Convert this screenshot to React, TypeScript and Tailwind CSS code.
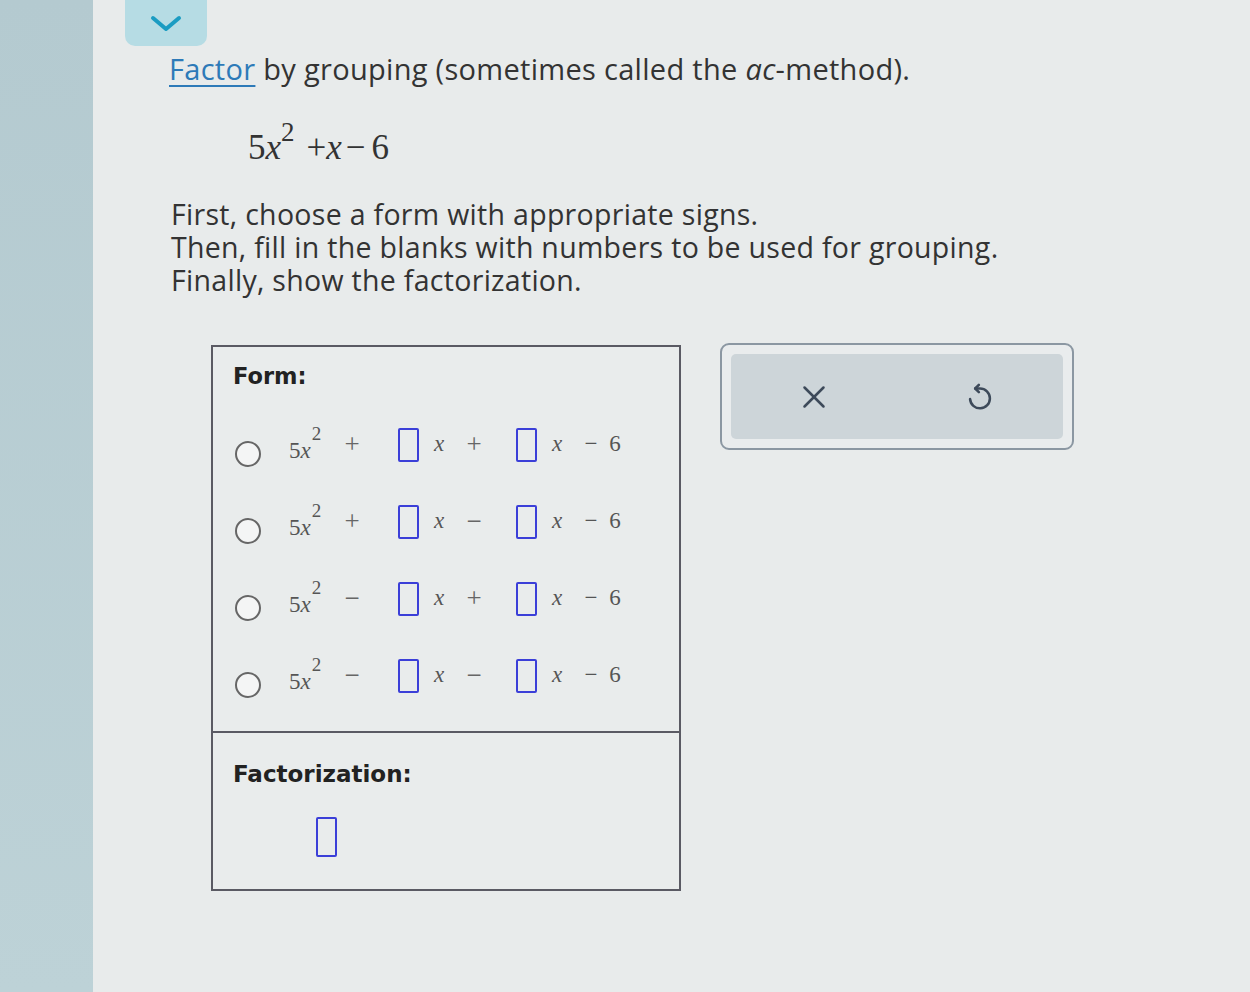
import { X } from "lucide-react";

const serif = "font-['Liberation_Serif',serif]";

function Blank({ className = "" }: { className?: string }) {
  return <span className={`block w-[21px] h-[34px] border-2 border-[#3b3fd8] rounded-[2px] ${className}`} />;
}

function FormRow({ first, second }: { first: string; second: string }) {
  return (
    <div className={`flex items-center h-[77px] text-[23px] text-[#555] ${serif}`}>
      <span className="ml-[22px] mt-[18px] w-[26px] h-[26px] rounded-full border-2 border-[#666] bg-[#f4f5f5]" />
      <span className="ml-[28px] w-[42px] whitespace-nowrap">
        5<i>x</i>
        <span className="text-[19px] [vertical-align:18px] ml-[1px]">2</span>
      </span>
      <span className="w-[42px] text-center text-[27px] text-[#666]">{first}</span>
      <Blank className="ml-[25px]" />
      <i className="w-[40px] text-center">x</i>
      <span className="w-[30px] text-center text-[27px] text-[#666]">{second}</span>
      <Blank className="ml-[27px]" />
      <i className="w-[40px] text-center">x</i>
      <span className="w-[28px] text-center">−</span>
      <span className="w-[20px] text-center">6</span>
    </div>
  );
}

function UndoIcon() {
  return (
    <svg width="34" height="34" viewBox="0 0 24 24" fill="none" stroke="#3d4a5a" strokeWidth="1.8" strokeLinecap="round" strokeLinejoin="round">
      <path d="M8.6 6 H12 A7 7 0 1 1 5 13.5" />
      <path d="M11.2 3.4 L8.6 6 L11.2 8.6" />
    </svg>
  );
}

export default function App() {
  return (
    <div className="flex w-[1250px] h-[992px] overflow-hidden font-['Open_Sans','Noto_Sans',sans-serif] text-[#333]">
      <div className="w-[93px] shrink-0 bg-gradient-to-b from-[#b4cad0] to-[#bdd2d7]" />
      <div className="flex-1 bg-[#e8ebeb] pl-[76px]">
        <div className="ml-[-44px] w-[82px] h-[46px] rounded-b-[10px] bg-[#b6dce4] flex items-center justify-center">
          <svg width="34" height="20" viewBox="0 0 34 20" fill="none" stroke="#1b9cc2" strokeWidth="4" strokeLinecap="round" strokeLinejoin="round">
            <path d="M4 5 L17 16 L30 5" />
          </svg>
        </div>

        <p className="mt-[5px] text-[29px] leading-[36px] tracking-[0.3px] whitespace-nowrap">
          <span className="text-[#2d7ab8] underline underline-offset-[5px] decoration-[2px]">Factor</span> by grouping (sometimes called the <i>ac</i>-method).
        </p>

        <div className={`mt-[25px] ml-[79px] text-[35px] leading-[40px] text-[#333] whitespace-nowrap ${serif}`}>
          5<i>x</i>
          <span className="text-[27px] [vertical-align:18px]">2</span>
          <span className="ml-[12px]">+</span>
          <i>x</i>
          <span className="ml-[4px]">−</span>
          <span className="ml-[6px]">6</span>
        </div>

        <div className="mt-[30px] ml-[2px] text-[28.5px] leading-[33px] tracking-[0.3px] whitespace-nowrap">
          <p>First, choose a form with appropriate signs.</p>
          <p>Then, fill in the blanks with numbers to be used for grouping.</p>
          <p>Finally, show the factorization.</p>
        </div>

        <div className="mt-[48px] ml-[42px] flex items-start gap-[39px]">
          <div className="w-[470px] border-2 border-[#5a5a63] bg-[#e9ecec]">
            <div className="h-[386px] pt-[14px] border-b-2 border-[#5a5a63]">
              <div className="ml-[20px] text-[22.5px] leading-[30px] font-bold text-[#222] font-['DejaVu_Sans',sans-serif]">Form:</div>
              <div className="mt-[15px]">
                <FormRow first="+" second="+" />
                <FormRow first="+" second="−" />
                <FormRow first="−" second="+" />
                <FormRow first="−" second="−" />
              </div>
            </div>
            <div className="h-[156px] pt-[26px]">
              <div className="ml-[20px] text-[23px] leading-[30px] font-bold text-[#222] font-['DejaVu_Sans',sans-serif]">Factorization:</div>
              <span className="block ml-[103px] mt-[28px] w-[21px] h-[40px] border-2 border-[#3b3fd8] rounded-[2px]" />
            </div>
          </div>

          <div className="mt-[-2px] w-[354px] h-[107px] rounded-[9px] border-2 border-[#8b97a2] bg-[#e9eced] p-[9px]">
            <div className="h-full rounded-[5px] bg-[#cdd5d9] flex">
              <div className="flex-1 flex items-center justify-center">
                <X size={38} strokeWidth={1.6} color="#3d4a5a" />
              </div>
              <div className="flex-1 flex items-center justify-center">
                <UndoIcon />
              </div>
            </div>
          </div>
        </div>
      </div>
    </div>
  );
}
